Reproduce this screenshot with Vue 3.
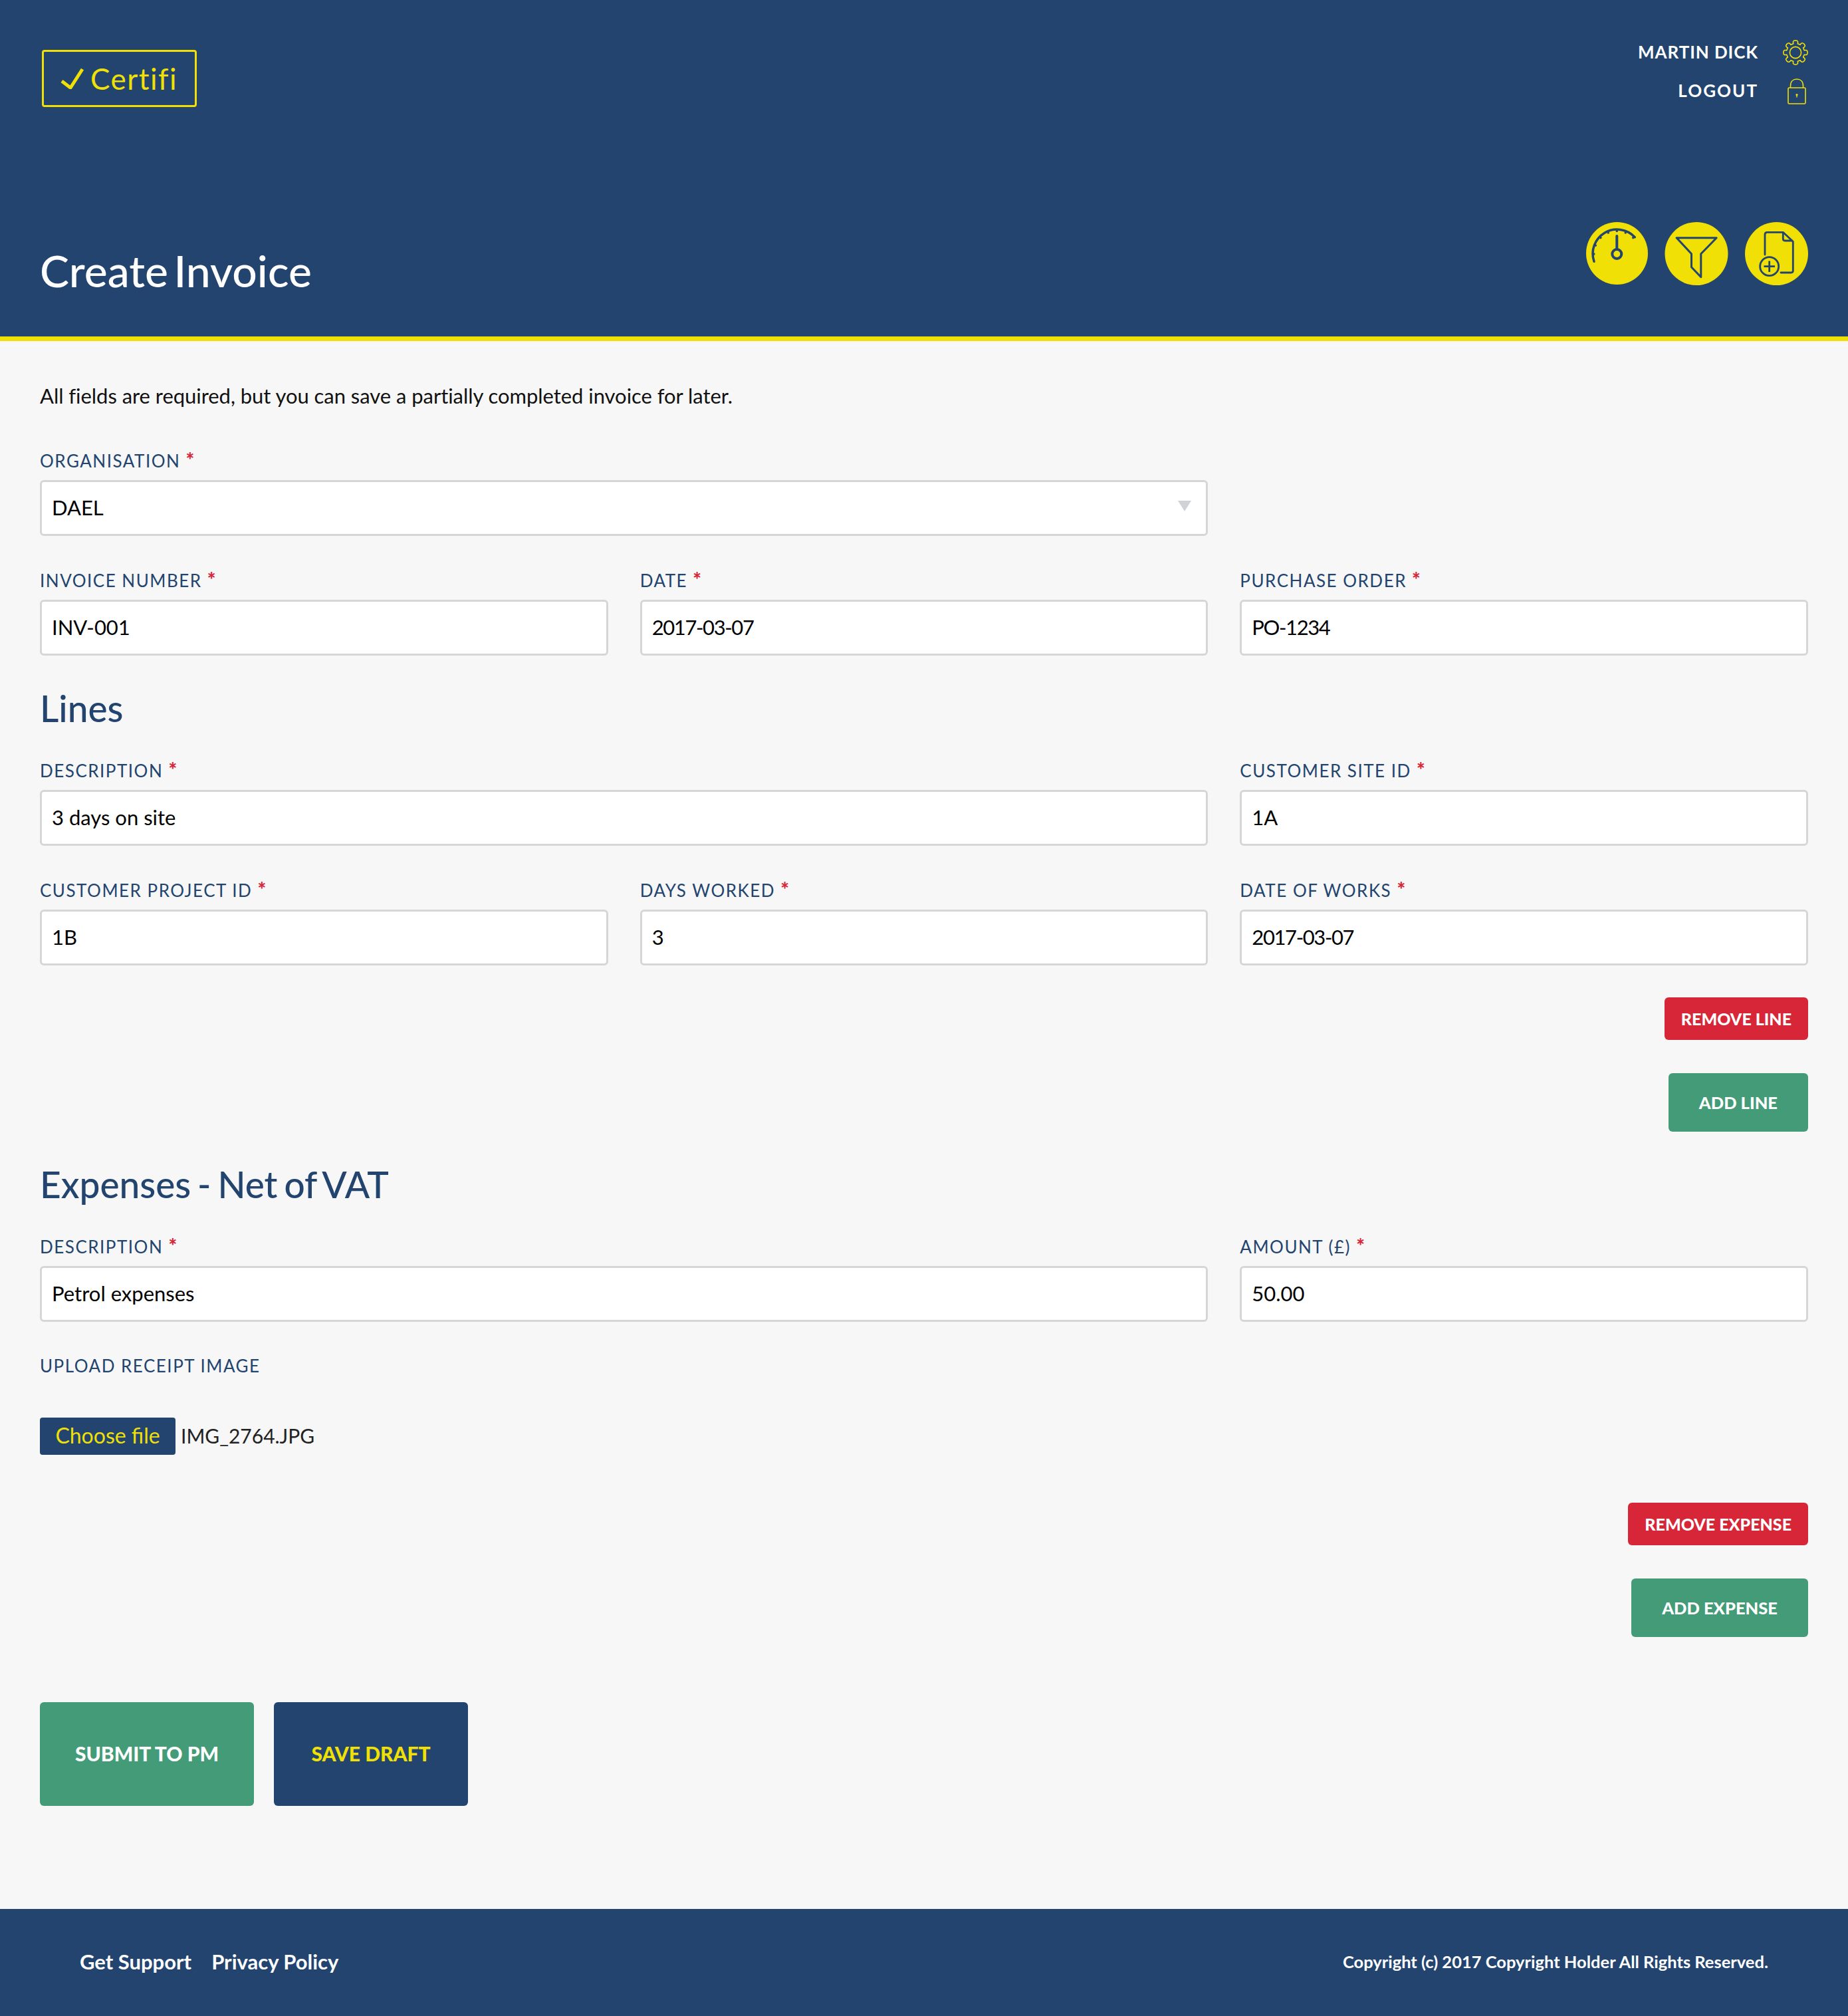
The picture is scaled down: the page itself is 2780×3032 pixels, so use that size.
<script setup>
const gearPath = (() => {
  const c = 19, teeth = 8, pts = []
  for (let i = 0; i < teeth; i++) {
    const a = (i / teeth) * Math.PI * 2 - Math.PI / 2
    const w = Math.PI / teeth
    const p = (r, t) => `${(c + r * Math.cos(t)).toFixed(2)} ${(c + r * Math.sin(t)).toFixed(2)}`
    pts.push(`${i ? 'L' : 'M'}${p(13.6, a - w * 0.62)}`)
    pts.push(`C${p(15.5, a - w * 0.6)} ${p(18.6, a - w * 0.62)} ${p(18.2, a)}`)
    pts.push(`C${p(18.6, a + w * 0.62)} ${p(15.5, a + w * 0.6)} ${p(13.6, a + w * 0.62)}`)
  }
  return pts.join(' ') + 'Z'
})()

const ticks = [180, 158, 135, 112, 90, 68, 45].map((deg) => {
  const t = (deg * Math.PI) / 180
  return {
    x1: (46.3 + 37 * Math.cos(t)).toFixed(2),
    y1: (48 - 37 * Math.sin(t)).toFixed(2),
    x2: (46.3 + 33 * Math.cos(t)).toFixed(2),
    y2: (48 - 33 * Math.sin(t)).toFixed(2)
  }
})

const invoiceRow = [
  { label: 'INVOICE NUMBER', value: 'INV-001' },
  { label: 'DATE', value: '2017-03-07', tight: true },
  { label: 'PURCHASE ORDER', value: 'PO-1234', tight: true }
]
const lineRow = [
  { label: 'CUSTOMER PROJECT ID', value: '1B' },
  { label: 'DAYS WORKED', value: '3' },
  { label: 'DATE OF WORKS', value: '2017-03-07', tight: true }
]
</script>

<template>
  <div class="page">
    <header class="header">
      <div class="top">
        <div class="logo">
          <svg class="check" viewBox="0 0 36 32" width="36" height="32">
            <path d="M2 20 L15 30 L33 2" fill="none" stroke="#f1e005" stroke-width="5" />
          </svg>
          <span>Certifi</span>
        </div>
        <nav class="usernav">
          <div class="navrow">
            <span class="navtext">MARTIN DICK</span>
            <span class="navicon gear">
              <svg viewBox="0 0 38 38" width="38" height="38" fill="none" stroke="#f1e005" stroke-width="1.6">
                <path :d="gearPath" stroke-linejoin="round" />
                <circle cx="19" cy="19" r="8.6" />
              </svg>
            </span>
          </div>
          <div class="navrow">
            <span class="navtext logout">LOGOUT</span>
            <span class="navicon lock">
              <svg viewBox="0 0 28 39" width="28" height="39" fill="none" stroke="#f1e005" stroke-width="1.6">
                <path d="M4.5 14 V11 C4.5 4.5 8.5 1 14 1 C19.5 1 23.5 4.5 23.5 11 V14" />
                <rect x="1" y="14" width="26" height="24" rx="1.5" />
                <circle cx="14" cy="24.5" r="1.6" fill="#f1e005" stroke="none" />
                <path d="M14 25 V28.5" stroke-width="1.4" />
              </svg>
            </span>
          </div>
        </nav>
      </div>
      <div class="bottom">
        <h1>Create Invoice</h1>
        <div class="actions">
          <svg class="round" viewBox="0 0 93 94" width="93" height="94" fill="none" stroke="#22446f" stroke-width="3.5">
            <ellipse cx="46.5" cy="47" rx="46.5" ry="47" fill="#f1e005" stroke="none" />
            <path d="M12 59.3 A36.5 36.5 0 0 1 73.3 22.7" stroke-linecap="round" />
            <line v-for="(t, i) in ticks" :key="i" :x1="t.x1" :y1="t.y1" :x2="t.x2" :y2="t.y2" stroke-width="3" />
            <path d="M46.3 21 V41" stroke-linecap="round" stroke-width="4" />
            <circle cx="46.3" cy="48" r="7" stroke-width="4" />
          </svg>
          <svg class="round" viewBox="0 0 95 95" width="96" height="95" fill="none" stroke="#22446f" stroke-width="3">
            <ellipse cx="47.5" cy="47.5" rx="47.5" ry="47.5" fill="#f1e005" stroke="none" />
            <path d="M17.7 23.7 H77.7 L54.3 47.7 V82.7 L40 67.7 V47.7 Z" stroke-linejoin="round" />
          </svg>
          <svg class="round" viewBox="0 0 95 95" width="95" height="95" fill="none" stroke="#22446f" stroke-width="2.8">
            <circle cx="47.5" cy="47.5" r="47.5" fill="#f1e005" stroke="none" />
            <path d="M30 49 V19 Q30 15.3 33.5 15.3 H57.3 L72.3 29.3 V73 Q72.3 76 69.5 76 H54" stroke-linejoin="round" stroke-linecap="round" />
            <path d="M57.3 15.3 V25 Q57.3 28 60 28 H71.5" />
            <circle cx="36.7" cy="66.7" r="14" />
            <path d="M36.7 58.5 V75 M28.5 66.7 H45" />
          </svg>
        </div>
      </div>
    </header>

    <main class="main">
      <p class="intro">All fields are required, but you can save a partially completed invoice for later.</p>

      <div class="grid">
        <div class="col8">
          <div class="label">ORGANISATION <i>*</i></div>
          <div class="field select">DAEL<span class="arrow"></span></div>
        </div>
      </div>

      <div class="grid row">
        <div v-for="f in invoiceRow" :key="f.label" class="col4">
          <div class="label">{{ f.label }} <i>*</i></div>
          <div class="field" :class="{ tight: f.tight }">{{ f.value }}</div>
        </div>
      </div>

      <h2 class="heading lines">Lines</h2>

      <div class="grid">
        <div class="col8">
          <div class="label">DESCRIPTION <i>*</i></div>
          <div class="field">3 days on site</div>
        </div>
        <div class="col4">
          <div class="label">CUSTOMER SITE ID <i>*</i></div>
          <div class="field">1A</div>
        </div>
      </div>

      <div class="grid row">
        <div v-for="f in lineRow" :key="f.label" class="col4">
          <div class="label">{{ f.label }} <i>*</i></div>
          <div class="field" :class="{ tight: f.tight }">{{ f.value }}</div>
        </div>
      </div>

      <div class="btnstack first">
        <button class="btn small red">REMOVE LINE</button>
        <button class="btn tall green">ADD LINE</button>
      </div>

      <h2 class="heading expenses">Expenses - Net of VAT</h2>

      <div class="grid">
        <div class="col8">
          <div class="label">DESCRIPTION <i>*</i></div>
          <div class="field">Petrol expenses</div>
        </div>
        <div class="col4">
          <div class="label">AMOUNT (£) <i>*</i></div>
          <div class="field">50.00</div>
        </div>
      </div>

      <div class="label upload">UPLOAD RECEIPT IMAGE</div>
      <div class="file">
        <button class="choose">Choose file</button>
        <span class="filename">IMG_2764.JPG</span>
      </div>

      <div class="btnstack second">
        <button class="btn small red">REMOVE EXPENSE</button>
        <button class="btn tall green">ADD EXPENSE</button>
      </div>

      <div class="submit">
        <button class="big green">SUBMIT TO PM</button>
        <button class="big navy">SAVE DRAFT</button>
      </div>
    </main>

    <footer class="footer">
      <div class="links">
        <a>Get Support</a>
        <a>Privacy Policy</a>
      </div>
      <div class="copy">Copyright (c) 2017 Copyright Holder All Rights Reserved.</div>
    </footer>
  </div>
</template>

<style>
html, body { margin: 0; background: #f7f7f7; }
</style>

<style scoped>
.page {
  width: 2780px;
  height: 3032px;
  display: flex;
  flex-direction: column;
  background: #f7f7f7;
  font-family: Lato, "Open Sans", sans-serif;
  color: #111;
}
.header {
  box-sizing: border-box;
  height: 513px;
  background: #22446f;
  border-bottom: 7px solid #f1e005;
  padding: 60px 60px 0 60px;
}
.top {
  display: flex;
  justify-content: space-between;
  align-items: flex-start;
  height: 274px;
}
.logo {
  box-sizing: border-box;
  margin-top: 15px;
  margin-left: 3px;
  width: 233px;
  height: 86px;
  border: 3px solid #f1e005;
  border-radius: 4px;
  display: flex;
  align-items: center;
  padding-left: 25px;
  gap: 9px;
  color: #f1e005;
  font-size: 44px;
  letter-spacing: 1.5px;
}
.check { flex: none; }
.usernav {
  display: flex;
  flex-direction: column;
  gap: 18px;
  margin-top: -1px;
  color: #fff;
  font-size: 26px;
  font-weight: 700;
  letter-spacing: 0.9px;
}
.navrow {
  display: flex;
  justify-content: flex-end;
  align-items: center;
  height: 40px;
}
.navtext { padding-bottom: 2px; }
.logout { letter-spacing: 2px; }
.navicon {
  width: 75px;
  display: flex;
  justify-content: flex-end;
}
.lock { padding-right: 3px; width: 72px; }
.bottom {
  display: flex;
  justify-content: space-between;
  align-items: flex-start;
}
h1 {
  margin: 33px 0 0;
  color: #fff;
  font-size: 66px;
  line-height: 80px;
  font-weight: 500;
  word-spacing: -8px;
}
.actions {
  display: flex;
  gap: 25px;
}
.round { display: block; }
.main {
  flex: 1;
  padding: 62px 60px 0;
}
.intro {
  margin: 0 0 62px;
  font-size: 31px;
  line-height: 40px;
  letter-spacing: -0.05px;
  color: #111;
}
.grid {
  display: grid;
  grid-template-columns: repeat(12, 1fr);
  column-gap: 48px;
}
.row { margin-top: 51px; }
.col8 { grid-column: span 8; }
.col4 { grid-column: span 4; }
.label {
  font-size: 26px;
  line-height: 30px;
  letter-spacing: 1.5px;
  color: #22446f;
  padding-top: 1px;
  margin-bottom: 14px;
}
.label i {
  font-style: normal;
  font-weight: 900;
  font-size: 30px;
  line-height: 0;
  color: #d72638;
}
.field {
  box-sizing: border-box;
  height: 84px;
  padding: 0 15px 3px;
  display: flex;
  align-items: center;
  position: relative;
  background: #fff;
  border: 3px solid #d6d6d6;
  border-radius: 6px;
  font-size: 31px;
  color: #000;
}
.tight { letter-spacing: -1.4px; }
.arrow {
  position: absolute;
  right: 22px;
  top: 28px;
  width: 0;
  height: 0;
  border-left: 10px solid transparent;
  border-right: 10px solid transparent;
  border-top: 16px solid #d0d2d5;
}
.heading {
  margin: 0;
  font-size: 55px;
  line-height: 70px;
  font-weight: 500;
  color: #22446f;
  word-spacing: -4px;
}
.lines { margin: 44px 0 43px; }
.expenses { margin: 44px 0 43px; }
.btnstack {
  display: flex;
  flex-direction: column;
  align-items: flex-end;
}
.first { margin-top: 48px; }
.second { margin-top: 72px; }
button {
  border: 0;
  padding: 0;
  font-family: inherit;
}
.btn {
  border-radius: 6px;
  color: #fff;
  font-size: 25px;
  font-weight: 900;
}
.small { height: 64px; padding: 0 25px; }
.tall { height: 88px; margin-top: 50px; padding: 0 46px; font-size: 25.5px; }
.red { background: #d72638; }
.green { background: #439c77; color: #fff; }
.upload { margin: 50px 0 63px; }
.file {
  display: flex;
  align-items: center;
  gap: 8px;
}
.choose {
  width: 204px;
  height: 56px;
  padding-bottom: 3px;
  background: #22446f;
  color: #f1e005;
  border-radius: 4px;
  font-size: 32px;
}
.filename {
  font-size: 30px;
  color: #222;
  padding-bottom: 3px;
}
.submit {
  display: flex;
  gap: 30px;
  margin-top: 98px;
}
.big {
  height: 156px;
  padding-bottom: 2px;
  border-radius: 6px;
  font-size: 30px;
  font-weight: 900;
}
.big.green { width: 322px; }
.navy { width: 292px; background: #22446f; color: #f1e005; }
.footer {
  box-sizing: border-box;
  height: 161px;
  background: #22446f;
  color: #fff;
  padding: 0 120px 3px;
  display: flex;
  justify-content: space-between;
  align-items: center;
}
.links {
  display: flex;
  gap: 30px;
  font-size: 31px;
  font-weight: 700;
}
.copy {
  font-size: 25.5px;
  font-weight: 700;
}
</style>
